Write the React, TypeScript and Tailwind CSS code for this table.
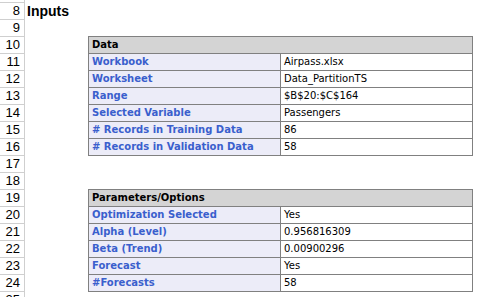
import React from 'react';

type Row = { label: string; value: string };

const dataRows: Row[] = [
  { label: 'Workbook', value: 'Airpass.xlsx' },
  { label: 'Worksheet', value: 'Data_PartitionTS' },
  { label: 'Range', value: '$B$20:$C$164' },
  { label: 'Selected Variable', value: 'Passengers' },
  { label: '# Records in Training Data', value: '86' },
  { label: '# Records in Validation Data', value: '58' },
];

const paramRows: Row[] = [
  { label: 'Optimization Selected', value: 'Yes' },
  { label: 'Alpha (Level)', value: '0.956816309' },
  { label: 'Beta (Trend)', value: '0.00900296' },
  { label: 'Forecast', value: 'Yes' },
  { label: '#Forecasts', value: '58' },
];

function SheetRow({ num, children }: { num?: number; children?: React.ReactNode }) {
  return (
    <div className="flex h-[17px] shrink-0">
      <div className="w-[25px] h-full shrink-0 border-r border-b border-[#cfcfcf] pr-[4px] text-right text-[13px] leading-[16px] text-black font-['Liberation_Sans',Arial,sans-serif]">
        {num}
      </div>
      <div className="flex-1 h-full">{children}</div>
    </div>
  );
}

function TableTop() {
  return <div className="ml-[63px] w-[385px] h-full border-b border-[#808080]" />;
}

function HeaderCell({ title }: { title: string }) {
  return (
    <div className="ml-[63px] w-[385px] h-full bg-[#d4d4d4] border-l border-r border-b border-[#808080] pl-[3px] text-[10px] font-bold leading-[16px] text-black">
      {title}
    </div>
  );
}

function BodyRow({ row }: { row: Row }) {
  return (
    <div className="ml-[63px] flex h-full text-[10px] leading-[16px]">
      <div className="w-[192px] h-full bg-[#ececf8] border-l border-b border-[#808080] pl-[3px] font-bold text-[#3a5fcd] whitespace-nowrap">
        {row.label}
      </div>
      <div className="w-[193px] h-full bg-white border-l border-r border-b border-[#808080] pl-[3px] text-black whitespace-nowrap">
        {row.value}
      </div>
    </div>
  );
}

export default function App() {
  return (
    <div className="w-[482px] h-[297px] overflow-hidden bg-white flex flex-col font-['DejaVu_Sans',Tahoma,sans-serif]">
      <div className="flex h-[3px] shrink-0">
        <div className="w-[25px] h-full border-r border-b border-[#cfcfcf]" />
      </div>
      <SheetRow num={8}>
        <div className="pl-[2px] text-[14px] font-bold leading-[16px] text-black font-['Liberation_Sans',Arial,sans-serif]">
          Inputs
        </div>
      </SheetRow>
      <SheetRow num={9}>
        <TableTop />
      </SheetRow>
      <SheetRow num={10}>
        <HeaderCell title="Data" />
      </SheetRow>
      {dataRows.map((r, i) => (
        <SheetRow key={r.label} num={11 + i}>
          <BodyRow row={r} />
        </SheetRow>
      ))}
      <SheetRow num={17} />
      <SheetRow num={18}>
        <TableTop />
      </SheetRow>
      <SheetRow num={19}>
        <HeaderCell title="Parameters/Options" />
      </SheetRow>
      {paramRows.map((r, i) => (
        <SheetRow key={r.label} num={20 + i}>
          <BodyRow row={r} />
        </SheetRow>
      ))}
      <SheetRow num={25} />
    </div>
  );
}
